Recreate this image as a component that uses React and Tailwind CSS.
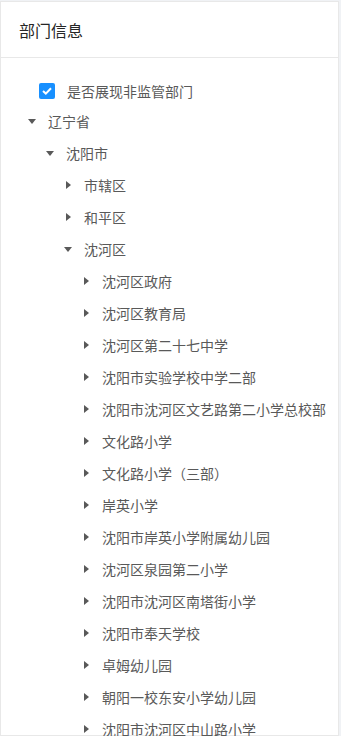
import React from 'react';

const tree = [
  { name: '辽宁省', level: 0, open: true },
  { name: '沈阳市', level: 1, open: true },
  { name: '市辖区', level: 2 },
  { name: '和平区', level: 2 },
  { name: '沈河区', level: 2, open: true },
  { name: '沈河区政府', level: 3 },
  { name: '沈河区教育局', level: 3 },
  { name: '沈河区第二十七中学', level: 3 },
  { name: '沈阳市实验学校中学二部', level: 3 },
  { name: '沈阳市沈河区文艺路第二小学总校部', level: 3 },
  { name: '文化路小学', level: 3 },
  { name: '文化路小学（三部）', level: 3 },
  { name: '岸英小学', level: 3 },
  { name: '沈阳市岸英小学附属幼儿园', level: 3 },
  { name: '沈河区泉园第二小学', level: 3 },
  { name: '沈阳市沈河区南塔街小学', level: 3 },
  { name: '沈阳市奉天学校', level: 3 },
  { name: '卓姆幼儿园', level: 3 },
  { name: '朝阳一校东安小学幼儿园', level: 3 },
  { name: '沈阳市沈河区中山路小学', level: 3 },
  { name: '沈阳市沈河区万柳塘小学', level: 3 },
];

function Caret({ open }) {
  return open ? (
    <svg width="8" height="5" viewBox="0 0 8 5" className="text-[#595959]">
      <path d="M0 0h8L4 5z" fill="currentColor" />
    </svg>
  ) : (
    <svg width="5" height="8" viewBox="0 0 5 8" className="text-[#595959]">
      <path d="M0 0v8l5-4z" fill="currentColor" />
    </svg>
  );
}

function TreeRow({ node }) {
  return (
    <li
      className="flex h-[32px] items-center"
      style={{ paddingLeft: 19 + node.level * 18 }}
    >
      <span className="flex w-[24px] shrink-0 items-center justify-center">
        <Caret open={node.open} />
      </span>
      <span className="whitespace-nowrap pl-[4px] text-[14px] text-[#595959]">
        {node.name}
      </span>
    </li>
  );
}

export default function App() {
  return (
    <div
      className="h-[736px] overflow-hidden bg-[#f0f2f5] pt-[1px] pr-[2px]"
      style={{ fontFamily: '"Noto Sans CJK SC", "Noto Sans", sans-serif' }}
    >
      <div className="h-full border border-[#e8e8e8] bg-white">
        {/* header */}
        <div className="flex h-[56px] items-center border-b border-[#e8e8e8] pl-[18px]">
          <span className="text-[16px] text-[#262626]">部门信息</span>
        </div>
        {/* body */}
        <div className="pt-[19px]">
          <label className="flex h-[28px] items-center pl-[38px]">
            <span className="flex h-[16px] w-[16px] items-center justify-center rounded-[2px] bg-[#1890ff]">
              <svg width="10" height="8" viewBox="0 0 10 8">
                <path
                  d="M1 4l2.8 2.6L9 1.2"
                  fill="none"
                  stroke="white"
                  strokeWidth="2"
                />
              </svg>
            </span>
            <span className="ml-[12px] text-[14px] text-[#595959]">
              是否展现非监管部门
            </span>
          </label>
          <ul>
            {tree.map((n) => (
              <TreeRow key={n.name} node={n} />
            ))}
          </ul>
        </div>
      </div>
    </div>
  );
}
